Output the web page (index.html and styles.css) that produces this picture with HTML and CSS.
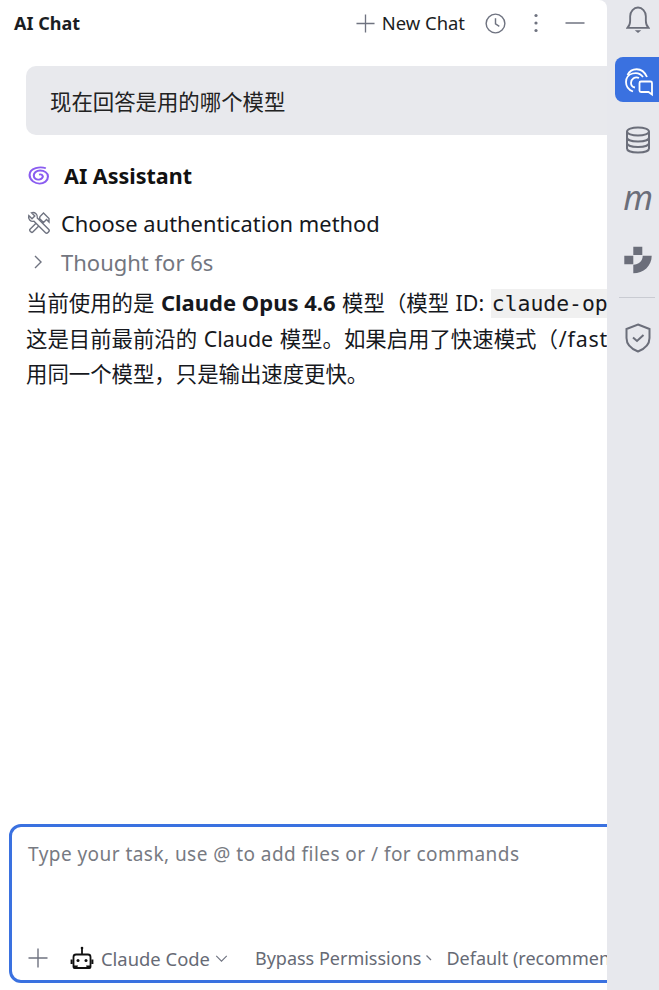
FILE: index.html
```html
<!DOCTYPE html>
<html>
<head>
    <meta charset="UTF-8">
    <title>AI Chat</title>
    <link rel="stylesheet" href="styles.css">
</head>
<body>
<div class="app">
    <div class="panel">
        <div class="top_bar">
            <div class="title">AI Chat</div>
            <div class="top_tools">
                <div class="new_chat">
                    <svg class="ico_plus" viewBox="0 0 20 20"><path d="M10 0.5V19.5M0.5 10H19.5"/></svg>
                    <span>New Chat</span>
                </div>
                <svg class="ico_clock" viewBox="0 0 22 22"><circle cx="11" cy="11" r="9.8"/><path d="M11 5.5V11.5L15 14"/></svg>
                <svg class="ico_more" viewBox="0 0 6 20"><circle cx="3" cy="2.5" r="1.6"/><circle cx="3" cy="10" r="1.6"/><circle cx="3" cy="17.5" r="1.6"/></svg>
                <svg class="ico_min" viewBox="0 0 20 2"><path d="M0.5 1H19.5"/></svg>
            </div>
        </div>

        <div class="chat">
            <div class="bubble">现在回答是用的哪个模型</div>
            <div class="who">
                <svg class="ico_swirl" viewBox="0 0 20 21" preserveAspectRatio="none"><path d="M17 2.5C12 0.5 1.5 1.5 1.5 10C1.5 16 7 19.5 11 19.5C15 19.5 19 16.5 19 11.5C19 7.5 15.5 5 11.5 5C8 5 5.5 7.5 5.5 10.5C5.5 13.5 8 15.5 10.5 15C13 14.5 14.5 12.5 14 11C13.5 9.5 12 9 10.5 9.5"/></svg>
                <span>AI Assistant</span>
            </div>
            <div class="tool_row">
                <svg class="ico_tools" viewBox="0 0 24 24"><path d="M3 18.2L13 8.2L15.8 11L5.8 21C4.5 22.3 1.7 19.5 3 18.2Z"/><path d="M12.5 7.5L13 5.5L16.5 2L22 7.5V11L19.5 8.5L16.5 11.5Z"/><path d="M4.5 1.8L7.8 5L5 7.8L1.8 4.5C0.8 8 3.5 11 7 10.3L18.5 21.8C20 23.3 23.3 20 21.8 18.5L10.3 7C11 3.5 8 0.8 4.5 1.8Z"/></svg>
                <span>Choose authentication method</span>
            </div>
            <div class="thought">
                <svg class="ico_right" viewBox="0 0 8 14"><path d="M1 1L7 7L1 13"/></svg>
                <span>Thought for 6s</span>
            </div>
            <div class="answer">当前使用的是 <b>Claude Opus 4.6</b> 模型（模型 ID: <code>claude-opus-4-6</code>）。<br>这是目前最前沿的 Claude 模型。如果启用了快速模式（<span class="cmd">/fast</span>），<br>用同一个模型，只是输出速度更快。</div>
        </div>

        <div class="input_box">
            <div class="hint">Type your task, use @ to add files or / for commands</div>
            <div class="input_bar">
                <svg class="ico_add" viewBox="0 0 20 20"><path d="M10 0.5V19.5M0.5 10H19.5"/></svg>
                <div class="opt opt_agent">
                    <svg class="ico_robot" viewBox="0 0 32 30"><circle cx="16" cy="5" r="1.3"/><path class="bot_line" d="M16 5V11M10 11.5H22C23.5 11.5 24.5 12.5 24.5 14V24C24.5 24.5 24 25 23.5 25H8.5C8 25 7.5 24.5 7.5 24V14C7.5 12.5 8.5 11.5 10 11.5ZM5.5 16.5V21M26.5 16.5V21"/><path d="M7.5 22.5H12L11 25H7.5ZM20 22.5H24.5V25H21Z"/><circle cx="12" cy="17.5" r="1.5"/><circle cx="20" cy="17.5" r="1.5"/></svg>
                    <span>Claude Code</span>
                    <svg class="ico_down" viewBox="0 0 14 8"><path d="M1 1L7 7L13 1"/></svg>
                </div>
                <div class="opt opt_perm">
                    <span>Bypass Permissions</span>
                    <svg class="ico_down_cut" viewBox="0 0 6 6"><path d="M0.5 0.5L5 5"/></svg>
                </div>
                <div class="opt opt_model"><span>Default (recommended)</span></div>
            </div>
        </div>
    </div>

    <div class="side">
        <div class="side_btn side_bell">
            <svg viewBox="0 0 26 30"><path d="M1.5 23.5H24.5C22.5 21.5 21.5 19.5 21.5 16V11C21.5 5.5 17.5 1.5 13 1.5C8.5 1.5 4.5 5.5 4.5 11V16C4.5 19.5 3.5 21.5 1.5 23.5Z"/><path class="fill" d="M9.5 26H16.5L13 29Z"/></svg>
        </div>
        <div class="side_btn active">
            <svg class="ico_active" viewBox="0 0 44 45"><path d="M12.5 18C16 11 27 9 32 20"/><path d="M28 20C23 13 11 16 11 25C11 30 14 33 18 34.5"/><path d="M24 21C20 19 16 22 16 26C16 28 17.5 30 20 30.5"/><path class="bub" d="M26 24.5H35.5C36.5 24.5 37 25 37 26V37.5L33.5 35H26C25 35 24.5 34.5 24.5 33.5V26C24.5 25 25 24.5 26 24.5Z"/></svg>
        </div>
        <div class="side_btn">
            <svg viewBox="0 0 26 28"><ellipse cx="13" cy="5.5" rx="11" ry="4"/><path d="M2 5.5V22.5C2 25 7 26.5 13 26.5C19 26.5 24 25 24 22.5V5.5M2 11.5C2 14 7 15.5 13 15.5C19 15.5 24 14 24 11.5M2 17C2 19.5 7 21 13 21C19 21 24 19.5 24 17"/></svg>
        </div>
        <div class="side_btn side_m">m</div>
        <div class="side_btn">
            <svg class="ico_puzzle" viewBox="0 0 36 40"><path class="fill" d="M13.3 6.7H22.3V15H13.3ZM4.3 15.7H13.3V24.3H4.3ZM22.7 15.7H31.7C31.7 26 23.5 33.3 13.3 33.3V24.7C18.5 24.7 22.7 21 22.7 15.7Z"/></svg>
        </div>
        <div class="side_line"></div>
        <div class="side_btn side_shield">
            <svg viewBox="0 0 26 30"><path d="M13 1.5L24.5 6V15C24.5 21.5 19.5 26 13 28.5C6.5 26 1.5 21.5 1.5 15V6Z"/><path d="M8 14.5L12 18L18.5 12"/></svg>
        </div>
    </div>
</div>
</body>
</html>
```

FILE: styles.css
```css
html,body{margin: 0; padding: 0; height: 100%; background: #e7e8ed;}
body{font-family: "Noto Sans", "Noto Sans CJK SC", sans-serif; color: #111;}
svg{display: block; flex: none; fill: none;}

.app{display: flex; width: 659px; height: 990px; overflow: hidden;}

/* left panel */
.panel{width: 607px; height: 990px; flex: none; display: flex; flex-direction: column;
    background: #fff; border-top-right-radius: 8px; overflow: hidden;}

.top_bar{display: flex; align-items: center; justify-content: space-between; height: 46px;
    padding: 0 22px 0 14px; flex: none;}
.title{font-size: 18px; font-weight: 700; color: #1b1d22;}
.top_tools{display: flex; align-items: center;}
.new_chat{display: flex; align-items: center; gap: 7px; font-size: 18.4px; color: #1b1d22;}
.new_chat span{margin-top: -2px;}
.ico_plus{width: 19px; height: 19px; stroke: #6f7380; stroke-width: 1.4;}
.ico_clock{width: 21px; height: 21px; margin-left: 20px; stroke: #6f7380; stroke-width: 1.5;}
.ico_more{width: 6px; height: 20px; margin-left: 27px; fill: #6f7380;}
.ico_min{width: 20px; height: 2px; margin-left: 26px; stroke: #6f7380; stroke-width: 1.5;}

.chat{flex: 1; padding: 20px 0 0 26px; min-height: 0;}
.bubble{height: 69px; display: flex; align-items: center; padding-left: 24px;
    background: #e8e9ed; border-radius: 10px 0 0 10px; font-size: 21.4px; color: #222;}
.who{display: flex; align-items: center; gap: 15px; height: 30px; margin-top: 25px; padding-left: 2px;
    font-size: 21.5px; font-weight: 700;}
.ico_swirl{width: 21px; height: 19px; stroke: #8a5cf0; stroke-width: 2;}
.tool_row{display: flex; align-items: center; gap: 10px; height: 30px; margin-top: 18px;
    padding-left: 1px; font-size: 21.9px; color: #16181d;}
.ico_tools{width: 24px; height: 24px; stroke: #6f7380; stroke-width: 1.4;}
.ico_tools path{fill: #fff;}
.thought{display: flex; align-items: center; gap: 19px; height: 30px; margin-top: 9px; padding-left: 8px;
    font-size: 22px; color: #73767f;}
.ico_right{width: 8px; height: 14px; stroke: #6f7380; stroke-width: 1.4;}
.answer{margin-top: 8px; font-size: 21.4px; line-height: 35.5px; white-space: nowrap; word-spacing: 1px; color: #16181d;}
.answer b{font-size: 22px; word-spacing: 0;}
.answer code{font-family: "DejaVu Sans Mono", "Liberation Mono", monospace; font-size: 21.4px; line-height: 1;
    background: #f0f0f0; padding: 2px 1px;}
.cmd{letter-spacing: 0.8px; margin-left: 1px;}

/* input */
.input_box{flex: none; height: 159px; margin: 0 0 7px 9px; box-sizing: border-box; width: 612px;
    border: 3px solid #3a71e0; border-radius: 12px; display: flex; flex-direction: column;
    justify-content: space-between; padding: 14px 0 7px 16px;}
.hint{font-size: 19px; letter-spacing: 0.45px; color: #777a82; white-space: nowrap;}
.input_bar{display: flex; align-items: center; white-space: nowrap; font-size: 18px; color: #666a75; height: 30px;}
.ico_add{width: 20px; height: 20px; stroke: #6f7380; stroke-width: 1.4;}
.opt{display: flex; align-items: center;}
.opt_agent{margin-left: 18px; gap: 3px; font-size: 18.4px;}
.opt_perm{margin-left: 27px; gap: 5px;}
.opt_model{margin-left: 14px;}
.ico_robot{width: 32px; height: 30px; fill: #111;}
.bot_line{fill: none; stroke: #111; stroke-width: 1.8;}
.ico_down{width: 13px; height: 7px; margin-left: 2px; stroke: #6f7380; stroke-width: 1.3;}
.ico_down_cut{width: 6px; height: 6px; stroke: #6f7380; stroke-width: 1.3;}

/* right strip */
.side{flex: 1; display: flex; flex-direction: column; align-items: flex-end; gap: 15px; margin-top: -3px;}
.side_btn{width: 44px; height: 45px; flex: none; display: flex; align-items: center; justify-content: center;
    padding-left: 2px; box-sizing: border-box;}
.side_btn svg{width: 26px; height: 30px; stroke: #6b6e7a; stroke-width: 2;}
.side_btn svg .fill{fill: #6b6e7a; stroke: none;}
.side_bell{padding-top: 1px;}
.side_btn.side_bell svg{width: 24px; height: 28px;}
.side_btn.active{background: #3a71e0; border-radius: 8px 0 0 8px; padding-left: 0;}
.side_btn svg.ico_active{width: 44px; height: 45px; stroke: #fff; stroke-width: 1.8;}
.ico_active .bub{fill: #3a71e0;}
.side_btn svg.ico_puzzle{width: 36px; height: 40px;}
.side_m{font: italic 400 34px "Noto Sans", sans-serif; color: #6b6e7a; padding-bottom: 6px;}
.side_line{width: 36px; height: 1px; flex: none; background: #c9cbd2; margin-right: 4px;}
.side_shield{margin-top: 2px;}
```
